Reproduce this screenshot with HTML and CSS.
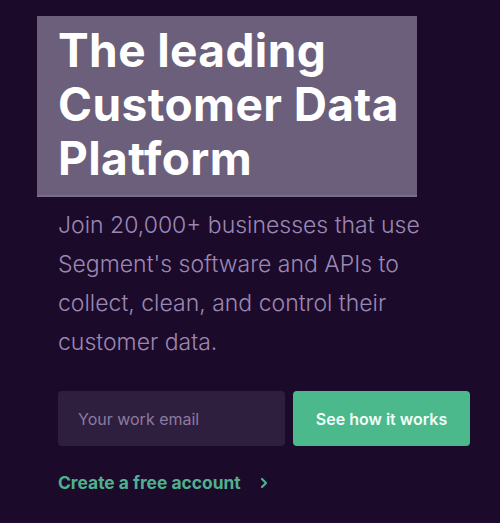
FILE: index.html
```html
<!DOCTYPE html>
<html lang="en">
<head>
    <meta charset="UTF-8">
    <meta name="viewport" content="width=device-width, initial-scale=1.0">
    <title>Segment - The leading Customer Data Platform</title>
    <link rel="stylesheet" href="styles.css">
</head>
<body>
    <section class="hero">
        <h1 class="hero-title">The leading Customer Data Platform</h1>
        <p class="hero-lead">Join 20,000+ businesses that use Segment's software and APIs to collect, clean, and control their customer data.</p>

        <form class="signup" onsubmit="return false;">
            <input type="email" class="signup-input" placeholder="Your work email">
            <button type="submit" class="signup-button">See how it works</button>
        </form>

        <a href="#" class="free-link">
            Create a free account
            <svg class="chevron" width="8" height="12" viewBox="0 0 8 12">
                <path d="M2 2l4 4-4 4" fill="none" stroke="currentColor" stroke-width="2.2" stroke-linecap="round" stroke-linejoin="round"/>
            </svg>
        </a>
    </section>
</body>
</html>
```

FILE: styles.css
```css
body {
    margin: 0;
    background: #1c0a2b;
    font-family: Inter, "Noto Sans", sans-serif;
}
.hero {
    padding: 16px 30px 40px 37px;
}
.hero-title {
    width: 380px;
    box-sizing: border-box;
    margin: 0;
    padding: 7px 10px 10px 21px;
    background: #6c5f7b;
    border-bottom: 2px solid #7a6c8c;
    color: #fff;
    font-size: 46px;
    font-weight: 700;
    line-height: 54px;
    letter-spacing: 0.4px;
}
.hero-lead {
    margin: 9px 0 0 21px;
    color: #9b88b2;
    font-size: 23px;
    font-weight: 300;
    line-height: 39px;
    max-width: 390px;
}
.signup {
    display: flex;
    gap: 8px;
    margin: 29px 0 0 21px;
}
.signup-input {
    width: 227px;
    height: 55px;
    box-sizing: border-box;
    padding: 0 20px;
    border: none;
    border-radius: 4px;
    background: #2e1f3f;
    font-family: inherit;
    font-size: 16px;
    color: #fff;
}
.signup-input::placeholder {
    color: #8c7b9f;
}
.signup-button {
    width: 177px;
    height: 55px;
    border: none;
    border-radius: 4px;
    background: #4bb98b;
    color: #f2fff8;
    font-family: inherit;
    font-size: 16px;
    font-weight: 600;
    cursor: pointer;
}
.free-link {
    display: inline-flex;
    align-items: center;
    gap: 19px;
    margin: 26px 0 0 21px;
    color: #4fb08e;
    font-size: 17.4px;
    font-weight: 700;
    text-decoration: none;
}
```
